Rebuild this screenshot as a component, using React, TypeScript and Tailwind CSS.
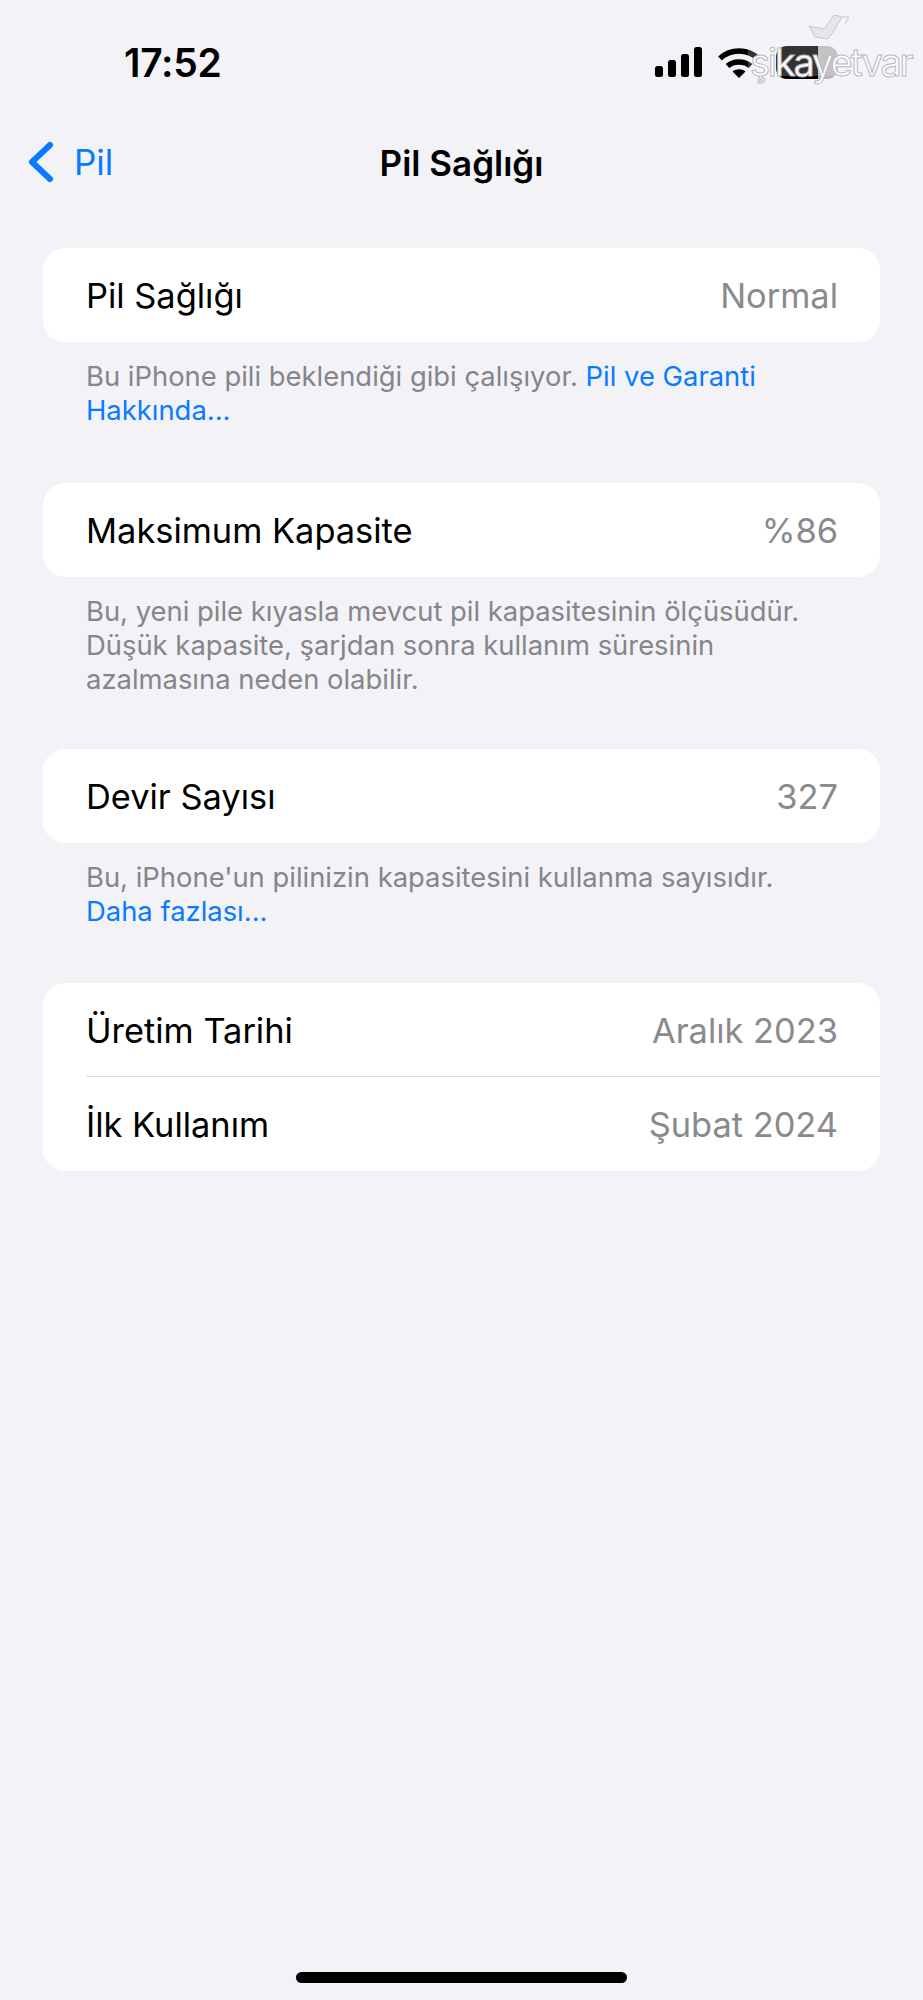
const font = "font-['Inter','Noto_Sans',sans-serif]";

function SignalIcon() {
  return (
    <svg width="48" height="31" viewBox="0 0 48 31" fill="#000">
      <rect x="1" y="19" width="8" height="11" rx="2.5" />
      <rect x="14" y="13" width="8" height="17" rx="2.5" />
      <rect x="27" y="7" width="8" height="23" rx="2.5" />
      <rect x="40" y="0" width="8" height="30" rx="2.5" />
    </svg>
  );
}

function WifiIcon() {
  return (
    <svg width="42" height="32" viewBox="0 0 42 32" fill="none" stroke="#000" strokeWidth="5.5">
      <path d="M2 11.5C12.5 1.5 29.5 1.5 40 11.5" />
      <path d="M9.5 19C15.5 13.5 26.5 13.5 32.5 19" />
      <path d="M21 31L14.5 24.5C18 21.5 24 21.5 27.5 24.5Z" fill="#000" stroke="none" />
    </svg>
  );
}

function Watermark() {
  return (
    <div className="absolute left-[748px] top-[14px] h-[62px] w-[162px]">
      <div className="absolute inset-0 bg-white/20" />
      <svg className="absolute left-[60px] top-0" width="42" height="26" viewBox="0 0 42 26" fill="#e6e6ea" stroke="#c8c8cc" strokeWidth="1">
        <path d="M1 12L16 15L26 1L34 3L25 18L20 25L7 23Z" />
        <path d="M34 3H41L37 10" fill="none" />
      </svg>
      <span className="absolute left-[2px] top-[26px] text-[38px] leading-[44px] tracking-[-2.2px] font-normal text-white [-webkit-text-stroke:1px_#b8b8bc] font-['Inter',sans-serif]">
        şikayetvar
      </span>
    </div>
  );
}

function StatusBar() {
  return (
    <div className="relative flex h-[124px] items-center pl-[124px] pr-[85px] pt-[1px]">
      <span className="text-[39px] font-semibold leading-none tracking-[-0.3px] text-black">17:52</span>
      <div className="ml-auto flex items-center gap-[16px]">
        <SignalIcon />
        <WifiIcon />
        <div className="flex h-[33px] w-[62px] items-center overflow-hidden rounded-[11px] bg-[#b5b5b8]">
          <div className="h-full w-[42px] bg-black" />
        </div>
      </div>
      <Watermark />
    </div>
  );
}

function NavBar() {
  return (
    <div className="relative flex h-[78px] items-center justify-center">
      <div className="absolute left-[27px] top-[17px] flex items-center gap-[19px] text-[#0a7aff]">
        <svg width="28" height="42" viewBox="0 0 28 42" fill="none" stroke="currentColor" strokeWidth="6" strokeLinecap="round" strokeLinejoin="round">
          <path d="M23 4L5 21L23 38" />
        </svg>
        <span className="text-[35px] leading-none">Pil</span>
      </div>
      <span className="text-[35px] font-semibold leading-none text-black">Pil Sağlığı</span>
    </div>
  );
}

function Row({ label, value, divider }: { label: string; value: string; divider?: boolean }) {
  return (
    <div className="flex h-[94px] flex-col pl-[43px]">
      <div className="flex flex-1 items-center justify-between pr-[42px] pt-[2px]">
        <span className="text-[34.4px] text-black">{label}</span>
        <span className="text-[34.4px] text-[#8a8a8e]">{value}</span>
      </div>
      {divider && <div className="h-[1px] bg-[#dcdcde]" />}
    </div>
  );
}

function Card({ children }: { children: React.ReactNode }) {
  return <div className="mx-[43px] overflow-hidden rounded-[22px] bg-white">{children}</div>;
}

function Footer({ children }: { children: React.ReactNode }) {
  return (
    <p className="mx-[86px] mt-[17px] text-[27.4px] leading-[34px] text-[#85858a]">{children}</p>
  );
}

function Link({ children }: { children: React.ReactNode }) {
  return <span className="text-[#0a7aff]">{children}</span>;
}

export default function App() {
  return (
    <div className={`relative h-[2000px] w-[923px] overflow-hidden bg-[#f2f2f7] ${font}`}>
      <StatusBar />
      <NavBar />
      <div className="pt-[46px]">
        <Card>
          <Row label="Pil Sağlığı" value="Normal" />
        </Card>
        <Footer>
          Bu iPhone pili beklendiği gibi çalışıyor. <Link>Pil ve Garanti Hakkında...</Link>
        </Footer>
        <div className="h-[56px]" />
        <Card>
          <Row label="Maksimum Kapasite" value="%86" />
        </Card>
        <Footer>
          Bu, yeni pile kıyasla mevcut pil kapasitesinin ölçüsüdür. Düşük kapasite, şarjdan sonra kullanım süresinin azalmasına neden olabilir.
        </Footer>
        <div className="h-[53px]" />
        <Card>
          <Row label="Devir Sayısı" value="327" />
        </Card>
        <Footer>
          Bu, iPhone'un pilinizin kapasitesini kullanma sayısıdır. <Link>Daha fazlası...</Link>
        </Footer>
        <div className="h-[55px]" />
        <Card>
          <Row label="Üretim Tarihi" value="Aralık 2023" divider />
          <Row label="İlk Kullanım" value="Şubat 2024" />
        </Card>
      </div>
      <div className="absolute bottom-[17px] left-[296px] h-[11px] w-[331px] rounded-full bg-black" />
    </div>
  );
}
